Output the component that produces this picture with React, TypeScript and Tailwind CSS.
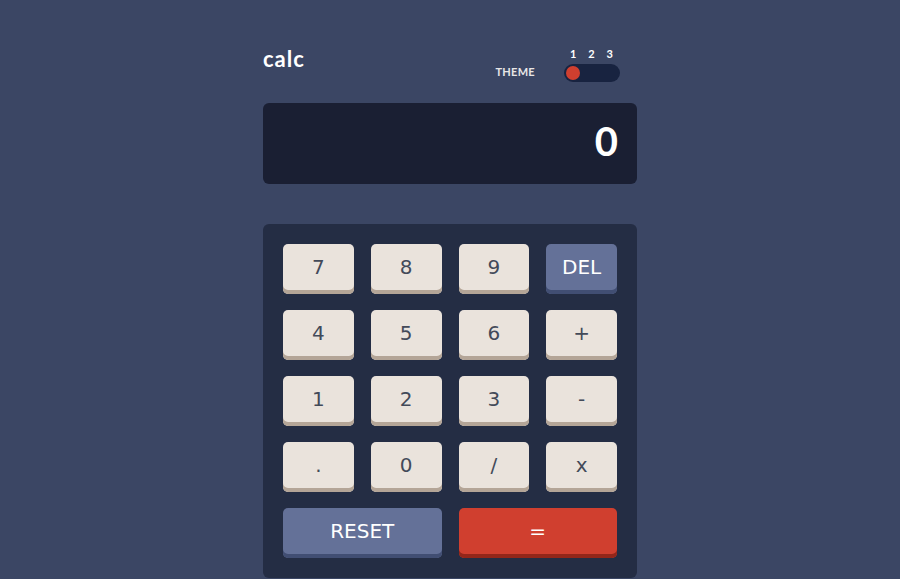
import React from "react";

const keys = ["7", "8", "9", "DEL", "4", "5", "6", "+", "1", "2", "3", "-", ".", "0", "/", "x"];

const Key = ({ label }: { label: string }) => {
  const isDel = label === "DEL";
  return (
    <button
      className={
        isDel
          ? "h-[50px] rounded-[5px] bg-[#647198] pb-[4px] text-[20px] text-white shadow-[inset_0_-4px_0_#414e73]"
          : "h-[50px] rounded-[5px] bg-[#eae3dc] pb-[4px] text-[20px] text-[#434a59] shadow-[inset_0_-4px_0_#b4a597]"
      }
      style={{ fontFamily: '"DejaVu Sans", sans-serif' }}
    >
      {label}
    </button>
  );
};

export default function App() {
  return (
    <div className="min-h-[579px] w-full bg-[#3b4664]">
      <div className="mx-auto w-[374px] pt-[48px]" style={{ fontFamily: "Lato, sans-serif" }}>
        {/* header */}
        <div className="flex items-start justify-between">
          <h1 className="text-[22px] font-bold leading-none tracking-[1px] text-white">calc</h1>
          <div className="mr-[17px] flex items-end gap-[29px]">
            <span className="mb-[2px] text-[11px] font-bold tracking-[0.3px] text-[#e8e6e6]">THEME</span>
            <div className="flex flex-col">
              <div className="flex justify-between pl-[6px] pr-[7px] text-[11px] font-bold leading-none text-white">
                <span>1</span>
                <span>2</span>
                <span>3</span>
              </div>
              <div className="mt-[5px] flex h-[18px] w-[56px] items-center rounded-full bg-[#182340] px-[2px]">
                <span className="h-[14px] w-[14px] rounded-full bg-[#d03f2f]" />
              </div>
            </div>
          </div>
        </div>

        {/* display */}
        <div className="mt-[21px] flex h-[81px] items-center justify-end rounded-[6px] bg-[#1a1f33] pr-[19px]">
          <span className="pb-[5px] text-[40px] font-bold text-white">0</span>
        </div>

        {/* keypad */}
        <div className="mt-[40px] rounded-[6px] bg-[#242d44] p-5">
          <div className="grid grid-cols-4 gap-x-[17px] gap-y-4">
            {keys.map((k) => (
              <Key key={k} label={k} />
            ))}
            <button
              className="col-span-2 h-[50px] rounded-[5px] bg-[#647198] pb-[4px] text-[20px] text-white shadow-[inset_0_-4px_0_#414e73]"
              style={{ fontFamily: '"DejaVu Sans", sans-serif' }}
            >
              RESET
            </button>
            <button
              className="col-span-2 h-[50px] rounded-[5px] bg-[#d03f2f] pb-[4px] text-[20px] text-white shadow-[inset_0_-4px_0_#93261a]"
              style={{ fontFamily: '"DejaVu Sans", sans-serif' }}
            >
              =
            </button>
          </div>
        </div>
      </div>
    </div>
  );
}
